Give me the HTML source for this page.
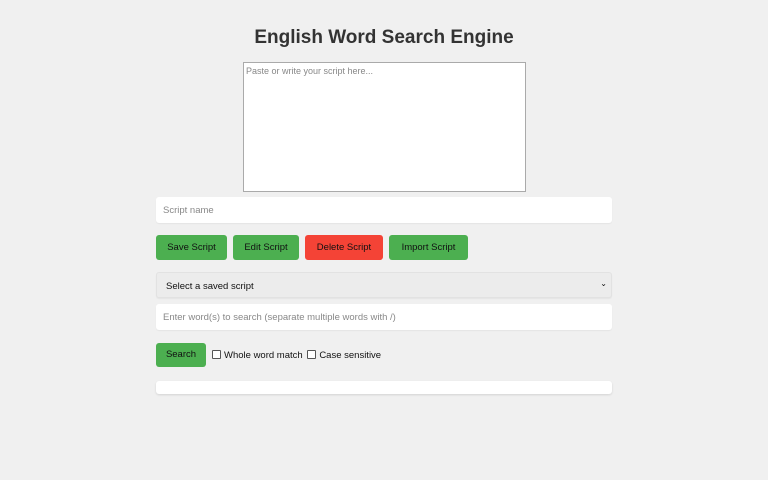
<!DOCTYPE html>
<html><head><style>
body{margin:0;background:#f0f0f0;font-family:"Liberation Sans",sans-serif;width:768px;height:480px;position:relative;overflow:hidden;color:#222}
.a{position:absolute;box-sizing:border-box}
h1{position:absolute;left:0;width:768px;top:27px;margin:0;text-align:center;font-size:19px;font-weight:bold;color:#333}
.ta{left:243px;top:62px;width:283px;height:130px;background:#fff;border:1px solid #aaa;font-size:9px;color:#888;padding:3px 2px}
.in{left:156px;width:456px;height:26px;background:#fff;border-radius:3px;font-size:9.5px;color:#888;padding:8px 7px;box-shadow:0 1px 1px rgba(0,0,0,.05)}
.btn{top:235px;height:25px;border-radius:3px;background:#4caf50;font-size:9.5px;color:#111;text-align:center;line-height:25px}
.cb{display:inline-block;width:7px;height:7px;border:1px solid #555;border-radius:1px;background:#fff;vertical-align:-1px;margin-right:3px}
</style></head><body>
<h1>English Word Search Engine</h1>
<div class="a ta">Paste or write your script here...</div>
<div class="a in" style="top:197px">Script name</div>
<div class="a btn" style="left:156px;width:71px">Save Script</div>
<div class="a btn" style="left:233px;width:66px">Edit Script</div>
<div class="a btn" style="left:305px;width:78px;background:#f44336">Delete Script</div>
<div class="a btn" style="left:389px;width:79px">Import Script</div>
<div class="a in" style="top:272px;background:#ececec;color:#111;border:1px solid #e2e2e2;padding-left:9px">Select a saved script<span style="position:absolute;right:4px;top:6px;font-size:8px">&#8964;</span></div>
<div class="a in" style="top:304px">Enter word(s) to search (separate multiple words with /)</div>
<div class="a btn" style="top:343px;left:156px;width:50px;height:24px;line-height:24px">Search</div>
<div class="a" style="left:212px;top:350px;font-size:9.5px;color:#111"><span class="cb"></span>Whole word match <span class="cb" style="margin-left:2px"></span>Case sensitive</div>
<div class="a" style="left:156px;top:381px;width:456px;height:13px;background:#fff;border-radius:3px;box-shadow:0 1px 2px rgba(0,0,0,.12)"></div>
</body></html>
